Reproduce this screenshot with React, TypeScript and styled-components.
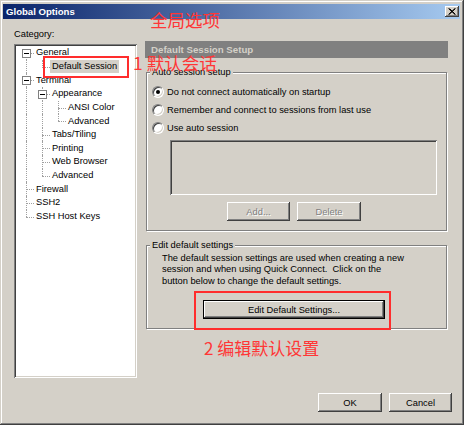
import styled, { createGlobalStyle } from "styled-components";

const GlobalStyle = createGlobalStyle`
    body {
        margin: 0;
        background: #fff;
    }
`;

const Window = styled.div`
    position: relative;
    box-sizing: border-box;
    width: 464px;
    height: 425px;
    padding: 4px 4px 0 3px;
    background: #d4d0c8;
    box-shadow: inset -1px -1px #404040, inset 1px 1px #d4d0c8, inset -2px -2px #808080, inset 2px 2px #fff;
    display: flex;
    flex-direction: column;
    font-family: "Liberation Sans", Arial, sans-serif;
    font-size: 9.3px;
    color: #000;
`;

const TitleBar = styled.div`
    height: 15px;
    display: flex;
    align-items: center;
    justify-content: space-between;
    padding: 0 1px 0 3px;
    background: linear-gradient(to right, #0a246a, #a6caf0);
    color: #fff;
    font-weight: bold;
    font-size: 9.6px;
`;

const CloseButton = styled.span`
    box-sizing: border-box;
    width: 14px;
    height: 11px;
    display: flex;
    align-items: center;
    justify-content: center;
    background: #d4d0c8;
    box-shadow: inset -1px -1px #404040, inset 1px 1px #fff, inset -2px -2px #808080;
`;

const Body = styled.div`
    display: flex;
    gap: 8px;
    padding: 9px 12px 0 11px;
`;

const LeftColumn = styled.div`
    width: 123px;
    display: flex;
    flex-direction: column;
    gap: 4px;
`;

const Caption = styled.div`
    line-height: 12px;
    height: 12px;
`;

const TreeBox = styled.div`
    box-sizing: border-box;
    height: 334px;
    background: #fff;
    padding: 2px 0 0 4px;
    box-shadow: inset 1px 1px #808080, inset -1px -1px #fff, inset 2px 2px #404040, inset -2px -2px #d4d0c8;
`;

const TreeRow = styled.div`
    display: flex;
    align-items: center;
    height: 13.65px;
`;

type GuideKind = "pipe" | "tee" | "elbow" | "expDown" | "expBoth";

const Guide = styled.span<{ $kind: GuideKind }>`
    position: relative;
    align-self: stretch;
    width: 16px;
    flex: none;
    &::before {
        content: "";
        position: absolute;
        left: 8px;
        top: ${(p) => (p.$kind === "expDown" ? "50%" : "0")};
        bottom: ${(p) => (p.$kind === "elbow" ? "50%" : "0")};
        border-left: 1px dotted #a0a0a0;
    }
    &::after {
        content: "";
        display: ${(p) => (p.$kind === "pipe" ? "none" : "block")};
        position: absolute;
        left: 8px;
        right: 0;
        top: 7px;
        border-top: 1px dotted #a0a0a0;
    }
`;

const Expander = styled.span`
    position: absolute;
    z-index: 1;
    left: 4px;
    top: 3px;
    box-sizing: border-box;
    width: 9px;
    height: 9px;
    border: 1px solid #808080;
    background: #fff;
    &::after {
        content: "";
        position: absolute;
        left: 1px;
        top: 3px;
        width: 5px;
        height: 1px;
        background: #000;
    }
`;

const TreeLabel = styled.span<{ $selected?: boolean }>`
    padding: 1px 2px;
    line-height: 11px;
    white-space: nowrap;
    background: ${(p) => (p.$selected ? "#d4d0c8" : "transparent")};
`;

const RightColumn = styled.div`
    flex: 1;
    padding-top: 13px;
    display: flex;
    flex-direction: column;
`;

const Heading = styled.div`
    height: 17px;
    line-height: 17px;
    padding-left: 6px;
    background: #808080;
    color: #d4d0c8;
    font-weight: bold;
    font-size: 9.7px;
`;

const Group = styled.fieldset<{ $gap: number }>`
    margin: ${(p) => p.$gap}px 1px 0 1px;
    padding: 0 0 9px 0;
    border: 1px solid #808080;
    box-shadow: 1px 1px 0 #fff, inset 1px 1px 0 #fff;
    min-width: 0;
    display: flex;
    flex-direction: column;
    align-items: flex-start;
`;

const Legend = styled.legend`
    margin-left: 3px;
    padding: 0 2px;
    line-height: 12px;
    background: #d4d0c8;
`;

const RadioList = styled.div`
    padding: 5px 0 0 5px;
    display: flex;
    flex-direction: column;
`;

const RadioRow = styled.label`
    height: 18px;
    display: flex;
    align-items: center;
    gap: 3px;
`;

const RadioDot = styled.span<{ $checked?: boolean }>`
    position: relative;
    box-sizing: border-box;
    width: 12px;
    height: 12px;
    border-radius: 50%;
    background: #fff;
    border: 1px solid;
    border-color: #808080 #fff #fff #808080;
    box-shadow: inset 1px 1px #404040, inset -1px -1px #d4d0c8;
    &::after {
        content: "";
        display: ${(p) => (p.$checked ? "block" : "none")};
        position: absolute;
        left: 3px;
        top: 3px;
        width: 4px;
        height: 4px;
        border-radius: 50%;
        background: #000;
    }
`;

const ListBox = styled.div`
    box-sizing: border-box;
    margin: 3px 0 0 23px;
    width: 267px;
    height: 55px;
    background: #d4d0c8;
    box-shadow: inset 1px 1px #808080, inset -1px -1px #fff, inset 2px 2px #404040, inset -2px -2px #d4d0c8;
`;

const ButtonRow = styled.div`
    display: flex;
    gap: 7px;
    margin: 7px 0 0 80px;
`;

const Button = styled.button<{ $width: number; $default?: boolean }>`
    box-sizing: border-box;
    width: ${(p) => p.$width}px;
    height: 19px;
    padding: 0;
    border: ${(p) => (p.$default ? "1px solid #000" : "none")};
    background: #d4d0c8;
    box-shadow: inset -1px -1px #404040, inset 1px 1px #fff, inset -2px -2px #808080, inset 2px 2px #d4d0c8;
    font-family: inherit;
    font-size: 9.3px;
    color: #000;
    &:disabled {
        color: #808080;
        text-shadow: 1px 1px #fff;
    }
`;

const Description = styled.p`
    margin: 1.5px 0 0 15px;
    line-height: 11.5px;
`;

const EditButtonWrap = styled.div`
    margin: 13px 0 0 56px;
`;

const Footer = styled.div`
    display: flex;
    justify-content: flex-end;
    gap: 7px;
    padding: 15px 8px 0 0;
`;

const Note = styled.div<{ $size: number }>`
    position: absolute;
    font-family: "Noto Sans CJK SC", "Liberation Sans", sans-serif;
    font-size: ${(p) => p.$size}px;
    line-height: 1;
    color: #ff3636;
    white-space: nowrap;
`;

const Highlight = styled.div`
    position: absolute;
    box-sizing: border-box;
    border: 2px solid #ff2d2d;
`;

type Node = { label: string; guides: GuideKind[]; selected?: boolean };

const tree: Node[] = [
    { label: "General", guides: ["expDown"] },
    { label: "Default Session", guides: ["pipe", "elbow"], selected: true },
    { label: "Terminal", guides: ["expBoth"] },
    { label: "Appearance", guides: ["pipe", "expBoth"] },
    { label: "ANSI Color", guides: ["pipe", "pipe", "tee"] },
    { label: "Advanced", guides: ["pipe", "pipe", "elbow"] },
    { label: "Tabs/Tiling", guides: ["pipe", "tee"] },
    { label: "Printing", guides: ["pipe", "tee"] },
    { label: "Web Browser", guides: ["pipe", "tee"] },
    { label: "Advanced", guides: ["pipe", "elbow"] },
    { label: "Firewall", guides: ["tee"] },
    { label: "SSH2", guides: ["tee"] },
    { label: "SSH Host Keys", guides: ["elbow"] },
];

const radios = [
    { label: "Do not connect automatically on startup", checked: true },
    { label: "Remember and connect to sessions from last use" },
    { label: "Use auto session" },
];

export default function App() {
    return (
        <>
            <GlobalStyle />
            <Window>
                <TitleBar>
                    <span>Global Options</span>
                    <CloseButton>
                        <svg width="8" height="7" viewBox="0 0 8 7">
                            <path d="M0.5 0.5 L7 6.5 M1.5 0.5 L7.5 6.5 M7 0.5 L0.5 6.5 M7.5 0.5 L1 6.5" stroke="#000" strokeWidth="1" />
                        </svg>
                    </CloseButton>
                </TitleBar>
                <Body>
                    <LeftColumn>
                        <Caption>Category:</Caption>
                        <TreeBox>
                            {tree.map((node, i) => (
                                <TreeRow key={i}>
                                    {node.guides.map((g, j) => (
                                        <Guide key={j} $kind={g}>
                                            {g.startsWith("exp") ? <Expander /> : null}
                                        </Guide>
                                    ))}
                                    <TreeLabel $selected={node.selected}>{node.label}</TreeLabel>
                                </TreeRow>
                            ))}
                        </TreeBox>
                    </LeftColumn>
                    <RightColumn>
                        <Heading>Default Session Setup</Heading>
                        <Group $gap={8}>
                            <Legend>Auto session setup</Legend>
                            <RadioList>
                                {radios.map((r) => (
                                    <RadioRow key={r.label}>
                                        <RadioDot $checked={r.checked} />
                                        {r.label}
                                    </RadioRow>
                                ))}
                            </RadioList>
                            <ListBox />
                            <ButtonRow>
                                <Button $width={63} disabled>Add...</Button>
                                <Button $width={64} disabled>Delete</Button>
                            </ButtonRow>
                        </Group>
                        <Group $gap={8}>
                            <Legend>Edit default settings</Legend>
                            <Description>
                                The default session settings are used when creating a new
                                <br />
                                session and when using Quick Connect.&nbsp; Click on the
                                <br />
                                button below to change the default settings.
                            </Description>
                            <EditButtonWrap>
                                <Button $width={182} $default>Edit Default Settings...</Button>
                            </EditButtonWrap>
                        </Group>
                    </RightColumn>
                </Body>
                <Footer>
                    <Button $width={64}>OK</Button>
                    <Button $width={63}>Cancel</Button>
                </Footer>

                <Note $size={17.5} style={{ left: 150, top: 11 }}>全局选项</Note>
                <Note $size={17.5} style={{ left: 133, top: 53.5 }}>1 默认会话</Note>
                <Note $size={17} style={{ left: 204, top: 339 }}>2 编辑默认设置</Note>
                <Highlight style={{ left: 43, top: 56, width: 86, height: 22 }} />
                <Highlight style={{ left: 194, top: 291, width: 197, height: 39 }} />
            </Window>
        </>
    );
}
